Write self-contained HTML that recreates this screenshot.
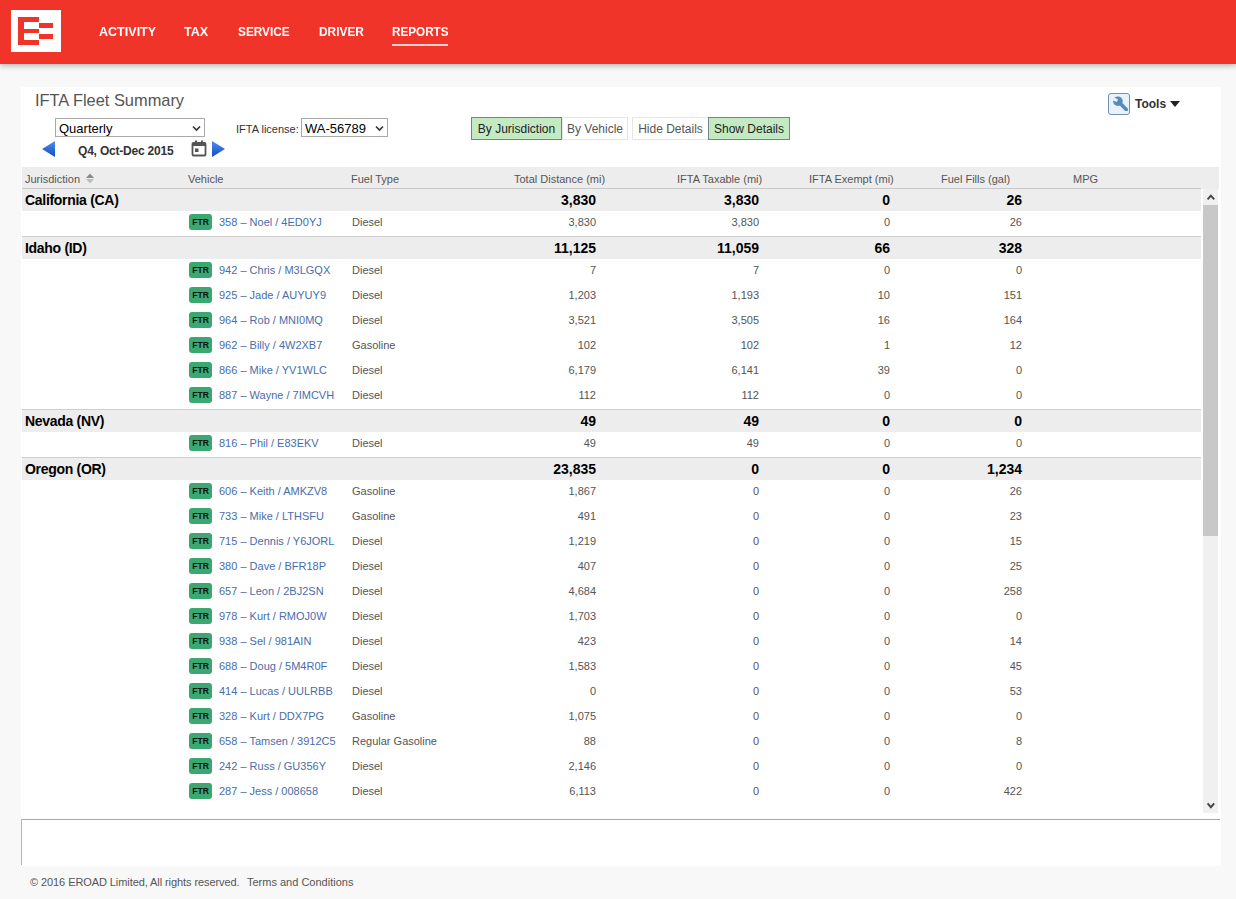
<!DOCTYPE html>
<html><head><meta charset="utf-8">
<style>
*{margin:0;padding:0;box-sizing:border-box}
html,body{width:1236px;height:899px;overflow:hidden}
body{position:relative;background:#f8f8f8;font-family:"Liberation Sans",sans-serif;color:#555}
.abs{position:absolute}
#hdr{position:absolute;left:0;top:0;width:1236px;height:64px;background:#f1342a;box-shadow:0 1px 6px rgba(0,0,0,.35)}
#logo{position:absolute;left:11px;top:10px;width:50px;height:42px;background:#fff}
#logo i{position:absolute;background:#f1342a}
.nav{position:absolute;top:24px;transform-origin:0 0;line-height:16px;font-size:13px;font-weight:bold;color:#fff;white-space:nowrap}
#card{position:absolute;left:21px;top:87px;width:1200px;height:779px;background:#fff}
.title{position:absolute;left:35px;top:90px;font-size:16.4px;line-height:20px;color:#555;white-space:nowrap}
.sel{position:absolute;border:1px solid #a9a9a9;background:#fff;height:19px;color:#000;font-size:13px;line-height:19px;white-space:nowrap}
.btn{position:absolute;top:117px;height:23px;font-size:12px;line-height:23px;white-space:nowrap;text-align:center}
#th{position:absolute;left:22px;top:167px;width:1197px;height:22px;background:#ededed}
#thline{position:absolute;left:22px;top:188px;width:1179px;height:1px;background:#c8c8c8}
.th{position:absolute;top:167px;font-size:11px;line-height:24px;color:#555;white-space:nowrap}
.g{position:absolute;left:22px;width:1179px;height:22px;background:#ededed}
.g span{position:absolute;top:0;line-height:22px;font-size:14px;font-weight:bold;color:#000;white-space:nowrap}
.g .gn{left:3px;letter-spacing:-0.3px}
.gv{}
.d{position:absolute;left:22px;width:1179px;height:25px;background:#fff}
.d span{position:absolute;top:0;line-height:23px;font-size:11px;white-space:nowrap}
.d .ftr{left:167px;top:3px;width:23px;height:16px;line-height:16px;background:#3ba872;border-radius:3px;color:#0a140e;font-size:8.6px;font-weight:bold;text-align:center;letter-spacing:0px}
.d .lk{left:197px;color:#4a6da9}
.d .fu{left:330px;color:#555}
.d .dv{color:#555}
.bl{position:absolute;left:22px;width:1179px;height:1px;background:#cfcfcf}
#sb{position:absolute;left:1203px;top:189px;width:15px;height:624px;background:#f0f0f0}
#thumb{position:absolute;left:1203px;top:205px;width:15px;height:331px;background:#c8c8c8}
#botline{position:absolute;left:22px;top:819px;width:1198px;height:1px;background:#a8a8a8}
#leftline{position:absolute;left:21px;top:819px;width:1px;height:46px;background:#b5b5b5}
.foot{position:absolute;top:875px;font-size:11px;line-height:14px;color:#555;white-space:nowrap}
</style></head><body>
<div id="hdr">
  <div id="logo">
    <i style="left:7px;top:7px;width:6px;height:28px"></i>
    <i style="left:7px;top:7px;width:21px;height:5px"></i>
    <i style="left:7px;top:19px;width:21px;height:4px"></i>
    <i style="left:7px;top:30px;width:21px;height:5px"></i>
    <i style="left:28px;top:13px;width:14px;height:5px"></i>
    <i style="left:28px;top:24px;width:14px;height:5px"></i>
  </div>
  <div class="nav" style="left:99px;transform:scaleX(.965)">ACTIVITY</div>
  <div class="nav" style="left:184px;transform:scaleX(.97)">TAX</div>
  <div class="nav" style="left:238px;transform:scaleX(.91)">SERVICE</div>
  <div class="nav" style="left:319px;transform:scaleX(.915)">DRIVER</div>
  <div class="nav" style="left:392px;transform:scaleX(.9)">REPORTS</div>
  <div class="abs" style="left:392px;top:44px;width:56px;height:2px;background:#fbd0cb"></div>
</div>
<div id="card"></div>
<div class="title">IFTA Fleet Summary</div>

<div class="sel" style="left:55px;top:118px;width:150px;padding-left:3px">Quarterly
  <svg class="abs" style="left:136px;top:6px" width="9" height="7" viewBox="0 0 9 7"><path d="M1 1.5 L4.5 5 L8 1.5" fill="none" stroke="#333" stroke-width="1.6"/></svg>
</div>
<div class="abs" style="left:236px;top:122px;font-size:11px;line-height:14px;color:#333;white-space:nowrap">IFTA license:</div>
<div class="sel" style="left:301px;top:118px;width:87px;padding-left:3px">WA-56789
  <svg class="abs" style="left:73px;top:6px" width="9" height="7" viewBox="0 0 9 7"><path d="M1 1.5 L4.5 5 L8 1.5" fill="none" stroke="#333" stroke-width="1.6"/></svg>
</div>

<svg class="abs" style="left:41px;top:140px" width="15" height="18" viewBox="0 0 15 18">
  <defs><linearGradient id="ga" x1="0" y1="0" x2="0" y2="1"><stop offset="0" stop-color="#4d8ff0"/><stop offset="1" stop-color="#1549c4"/></linearGradient></defs>
  <path d="M1 9 L14 1 L14 17 Z" fill="url(#ga)"/></svg>
<div class="abs" style="left:78px;top:144px;font-size:12px;font-weight:bold;line-height:15px;color:#333;letter-spacing:-0.2px;white-space:nowrap">Q4, Oct-Dec 2015</div>
<svg class="abs" style="left:191px;top:140px" width="16" height="17" viewBox="0 0 16 17">
  <rect x="1.5" y="3" width="13" height="12.5" rx="1" fill="none" stroke="#555" stroke-width="1.8"/>
  <rect x="1.5" y="3" width="13" height="3" fill="#555"/>
  <rect x="4" y="0.5" width="2" height="3.5" fill="#555"/><rect x="10" y="0.5" width="2" height="3.5" fill="#555"/>
  <rect x="4" y="8.5" width="3.5" height="3.5" fill="#555"/></svg>
<svg class="abs" style="left:211px;top:140px" width="15" height="18" viewBox="0 0 15 18">
  <path d="M1 1 L14 9 L1 17 Z" fill="url(#ga)"/></svg>

<div class="btn" style="left:471px;width:91px;background:#c3eac3;border:1px solid #6b8b88;color:#222">By Jurisdiction</div>
<div class="btn" style="left:562px;width:66px;background:#fff;border:1px solid #e6e6e6;color:#555">By Vehicle</div>
<div class="btn" style="left:632px;width:77px;background:#fff;border:1px solid #e6e6e6;color:#555">Hide Details</div>
<div class="btn" style="left:708px;width:82px;background:#c3eac3;border:1px solid #6b8b88;color:#222">Show Details</div>

<div class="abs" style="left:1108px;top:93px;width:22px;height:22px;border:1px solid #7290b4;border-radius:3px;background:#e7f2fc"></div>
<svg class="abs" style="left:1108px;top:93px" width="22" height="22" viewBox="0 0 22 22">
  <defs><mask id="wm"><rect width="22" height="22" fill="#fff"/><path d="M10 6.2 L3.4 3.6 L2.3 6.5 L8.9 9.0 Z" fill="#000"/></mask></defs>
  <g mask="url(#wm)"><circle cx="9.9" cy="8.2" r="4.8" fill="#5b88bf"/><path d="M10.4 8.6 L18.2 16.6" stroke="#5b88bf" stroke-width="3.6" stroke-linecap="round"/></g></svg>
<div class="abs" style="left:1135px;top:97px;font-size:12px;font-weight:bold;line-height:15px;color:#333;white-space:nowrap">Tools</div>
<svg class="abs" style="left:1170px;top:101px" width="10" height="6" viewBox="0 0 10 6"><path d="M0 0 H10 L5 6 Z" fill="#222"/></svg>

<div id="th"></div>
<div id="thline"></div>
<div class="th" style="left:25px">Jurisdiction</div>
<svg class="abs" style="left:86px;top:173px" width="8" height="11" viewBox="0 0 8 11"><path d="M0 5 L4 0.5 L8 5 Z" fill="#8a8a8a"/><path d="M0 6 L8 6 L4 10.5 Z" fill="#bdbdbd"/></svg>
<div class="th" style="left:188px">Vehicle</div>
<div class="th" style="left:351px">Fuel Type</div>
<div class="th" style="left:514px">Total Distance (mi)</div>
<div class="th" style="left:677px">IFTA Taxable (mi)</div>
<div class="th" style="left:809px">IFTA Exempt (mi)</div>
<div class="th" style="left:941px">Fuel Fills (gal)</div>
<div class="th" style="left:1073px">MPG</div>

<div class="g" style="top:189px"><span class="gn">California (CA)</span><span class="gv" style="right:605px">3,830</span><span class="gv" style="right:442px">3,830</span><span class="gv" style="right:311px">0</span><span class="gv" style="right:179px">26</span></div>
<div class="d" style="top:211px"><span class="ftr">FTR</span><span class="lk">358 – Noel / 4ED0YJ</span><span class="fu">Diesel</span><span class="dv" style="right:605px">3,830</span><span class="dv" style="right:442px">3,830</span><span class="dv" style="right:311px">0</span><span class="dv" style="right:179px">26</span></div>
<div class="bl" style="top:236px"></div>
<div class="g" style="top:237px"><span class="gn">Idaho (ID)</span><span class="gv" style="right:605px">11,125</span><span class="gv" style="right:442px">11,059</span><span class="gv" style="right:311px">66</span><span class="gv" style="right:179px">328</span></div>
<div class="d" style="top:259px"><span class="ftr">FTR</span><span class="lk">942 – Chris / M3LGQX</span><span class="fu">Diesel</span><span class="dv" style="right:605px">7</span><span class="dv" style="right:442px">7</span><span class="dv" style="right:311px">0</span><span class="dv" style="right:179px">0</span></div>
<div class="d" style="top:284px"><span class="ftr">FTR</span><span class="lk">925 – Jade / AUYUY9</span><span class="fu">Diesel</span><span class="dv" style="right:605px">1,203</span><span class="dv" style="right:442px">1,193</span><span class="dv" style="right:311px">10</span><span class="dv" style="right:179px">151</span></div>
<div class="d" style="top:309px"><span class="ftr">FTR</span><span class="lk">964 – Rob / MNI0MQ</span><span class="fu">Diesel</span><span class="dv" style="right:605px">3,521</span><span class="dv" style="right:442px">3,505</span><span class="dv" style="right:311px">16</span><span class="dv" style="right:179px">164</span></div>
<div class="d" style="top:334px"><span class="ftr">FTR</span><span class="lk">962 – Billy / 4W2XB7</span><span class="fu">Gasoline</span><span class="dv" style="right:605px">102</span><span class="dv" style="right:442px">102</span><span class="dv" style="right:311px">1</span><span class="dv" style="right:179px">12</span></div>
<div class="d" style="top:359px"><span class="ftr">FTR</span><span class="lk">866 – Mike / YV1WLC</span><span class="fu">Diesel</span><span class="dv" style="right:605px">6,179</span><span class="dv" style="right:442px">6,141</span><span class="dv" style="right:311px">39</span><span class="dv" style="right:179px">0</span></div>
<div class="d" style="top:384px"><span class="ftr">FTR</span><span class="lk">887 – Wayne / 7IMCVH</span><span class="fu">Diesel</span><span class="dv" style="right:605px">112</span><span class="dv" style="right:442px">112</span><span class="dv" style="right:311px">0</span><span class="dv" style="right:179px">0</span></div>
<div class="bl" style="top:409px"></div>
<div class="g" style="top:410px"><span class="gn">Nevada (NV)</span><span class="gv" style="right:605px">49</span><span class="gv" style="right:442px">49</span><span class="gv" style="right:311px">0</span><span class="gv" style="right:179px">0</span></div>
<div class="d" style="top:432px"><span class="ftr">FTR</span><span class="lk">816 – Phil / E83EKV</span><span class="fu">Diesel</span><span class="dv" style="right:605px">49</span><span class="dv" style="right:442px">49</span><span class="dv" style="right:311px">0</span><span class="dv" style="right:179px">0</span></div>
<div class="bl" style="top:457px"></div>
<div class="g" style="top:458px"><span class="gn">Oregon (OR)</span><span class="gv" style="right:605px">23,835</span><span class="gv" style="right:442px">0</span><span class="gv" style="right:311px">0</span><span class="gv" style="right:179px">1,234</span></div>
<div class="d" style="top:480px"><span class="ftr">FTR</span><span class="lk">606 – Keith / AMKZV8</span><span class="fu">Gasoline</span><span class="dv" style="right:605px">1,867</span><span class="dv" style="right:442px">0</span><span class="dv" style="right:311px">0</span><span class="dv" style="right:179px">26</span></div>
<div class="d" style="top:505px"><span class="ftr">FTR</span><span class="lk">733 – Mike / LTHSFU</span><span class="fu">Gasoline</span><span class="dv" style="right:605px">491</span><span class="dv" style="right:442px">0</span><span class="dv" style="right:311px">0</span><span class="dv" style="right:179px">23</span></div>
<div class="d" style="top:530px"><span class="ftr">FTR</span><span class="lk">715 – Dennis / Y6JORL</span><span class="fu">Diesel</span><span class="dv" style="right:605px">1,219</span><span class="dv" style="right:442px">0</span><span class="dv" style="right:311px">0</span><span class="dv" style="right:179px">15</span></div>
<div class="d" style="top:555px"><span class="ftr">FTR</span><span class="lk">380 – Dave / BFR18P</span><span class="fu">Diesel</span><span class="dv" style="right:605px">407</span><span class="dv" style="right:442px">0</span><span class="dv" style="right:311px">0</span><span class="dv" style="right:179px">25</span></div>
<div class="d" style="top:580px"><span class="ftr">FTR</span><span class="lk">657 – Leon / 2BJ2SN</span><span class="fu">Diesel</span><span class="dv" style="right:605px">4,684</span><span class="dv" style="right:442px">0</span><span class="dv" style="right:311px">0</span><span class="dv" style="right:179px">258</span></div>
<div class="d" style="top:605px"><span class="ftr">FTR</span><span class="lk">978 – Kurt / RMOJ0W</span><span class="fu">Diesel</span><span class="dv" style="right:605px">1,703</span><span class="dv" style="right:442px">0</span><span class="dv" style="right:311px">0</span><span class="dv" style="right:179px">0</span></div>
<div class="d" style="top:630px"><span class="ftr">FTR</span><span class="lk">938 – Sel / 981AIN</span><span class="fu">Diesel</span><span class="dv" style="right:605px">423</span><span class="dv" style="right:442px">0</span><span class="dv" style="right:311px">0</span><span class="dv" style="right:179px">14</span></div>
<div class="d" style="top:655px"><span class="ftr">FTR</span><span class="lk">688 – Doug / 5M4R0F</span><span class="fu">Diesel</span><span class="dv" style="right:605px">1,583</span><span class="dv" style="right:442px">0</span><span class="dv" style="right:311px">0</span><span class="dv" style="right:179px">45</span></div>
<div class="d" style="top:680px"><span class="ftr">FTR</span><span class="lk">414 – Lucas / UULRBB</span><span class="fu">Diesel</span><span class="dv" style="right:605px">0</span><span class="dv" style="right:442px">0</span><span class="dv" style="right:311px">0</span><span class="dv" style="right:179px">53</span></div>
<div class="d" style="top:705px"><span class="ftr">FTR</span><span class="lk">328 – Kurt / DDX7PG</span><span class="fu">Gasoline</span><span class="dv" style="right:605px">1,075</span><span class="dv" style="right:442px">0</span><span class="dv" style="right:311px">0</span><span class="dv" style="right:179px">0</span></div>
<div class="d" style="top:730px"><span class="ftr">FTR</span><span class="lk">658 – Tamsen / 3912C5</span><span class="fu">Regular Gasoline</span><span class="dv" style="right:605px">88</span><span class="dv" style="right:442px">0</span><span class="dv" style="right:311px">0</span><span class="dv" style="right:179px">8</span></div>
<div class="d" style="top:755px"><span class="ftr">FTR</span><span class="lk">242 – Russ / GU356Y</span><span class="fu">Diesel</span><span class="dv" style="right:605px">2,146</span><span class="dv" style="right:442px">0</span><span class="dv" style="right:311px">0</span><span class="dv" style="right:179px">0</span></div>
<div class="d" style="top:780px"><span class="ftr">FTR</span><span class="lk">287 – Jess / 008658</span><span class="fu">Diesel</span><span class="dv" style="right:605px">6,113</span><span class="dv" style="right:442px">0</span><span class="dv" style="right:311px">0</span><span class="dv" style="right:179px">422</span></div>

<div id="sb"></div>
<div id="thumb"></div>
<svg class="abs" style="left:1206px;top:193px" width="10" height="8" viewBox="0 0 10 8"><path d="M1.6 6.4 L4.9 2.6 L8.2 6.4" fill="none" stroke="#444" stroke-width="1.9"/></svg>
<svg class="abs" style="left:1206px;top:801px" width="10" height="8" viewBox="0 0 10 8"><path d="M1.6 2.4 L4.9 6.2 L8.2 2.4" fill="none" stroke="#444" stroke-width="1.9"/></svg>
<div id="botline"></div>
<div id="leftline"></div>

<div class="foot" style="left:30px;letter-spacing:-0.08px">© 2016 EROAD Limited, All rights reserved.</div>
<div class="foot" style="left:247px">Terms and Conditions</div>
</body></html>
